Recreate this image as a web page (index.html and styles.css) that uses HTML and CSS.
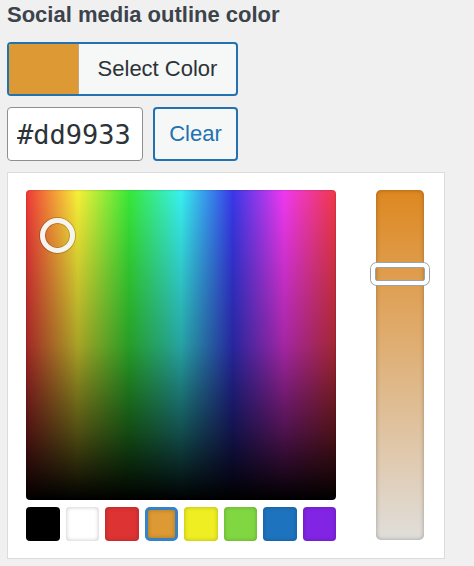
FILE: index.html
```html
<!doctype html>
<html>

<head>
  <title>Color field</title>
  <link rel="stylesheet" href="styles.css">
</head>

<body>
  <div class="field">
    <h3 class="field-title">Social media outline color</h3>
    <button type="button" class="color-result">
      <span class="color-swatch"></span>
      <span class="color-label">Select Color</span>
    </button>
    <div class="input-row">
      <input type="text" class="hex-input" value="#dd9933">
      <button type="button" class="clear-btn">Clear</button>
    </div>
    <div class="picker">
      <div class="picker-main">
        <div class="square">
          <span class="square-handle"></span>
        </div>
        <div class="palette">
          <a class="swatch" style="background-color: #000000"></a>
          <a class="swatch" style="background-color: #ffffff"></a>
          <a class="swatch" style="background-color: #dd3333"></a>
          <a class="swatch active" style="background-color: #dd9933"></a>
          <a class="swatch" style="background-color: #eeee22"></a>
          <a class="swatch" style="background-color: #81d742"></a>
          <a class="swatch" style="background-color: #1e73be"></a>
          <a class="swatch" style="background-color: #8224e3"></a>
        </div>
      </div>
      <div class="slider">
        <span class="slider-handle"></span>
      </div>
    </div>
  </div>
</body>

</html>
```

FILE: styles.css
```css
html {
  font-family: "Liberation Sans", Arial, sans-serif;
}

body {
  margin: 0;
  padding: 0 0 0 7px;
  background: #f0f0f1;
  color: #3c434a;
}

.field-title {
  margin: 0;
  padding-top: 1px;
  font-size: 22px;
  line-height: 28px;
  font-weight: bold;
  color: #3c434a;
}

.color-result {
  display: flex;
  align-items: stretch;
  box-sizing: border-box;
  width: 231px;
  height: 54px;
  margin-top: 13px;
  padding: 0;
  border: 2px solid #2271b1;
  border-radius: 4px;
  background: #f6f7f7;
  overflow: hidden;
  font: inherit;
}

.color-swatch {
  width: 69px;
  background: #dd9933;
  border-right: 1px solid #c9a57a;
}

.color-label {
  flex: 1;
  align-self: center;
  text-align: center;
  font-size: 22px;
  color: #2c3338;
}

.input-row {
  display: flex;
  margin-top: 11px;
}

.hex-input {
  box-sizing: border-box;
  width: 136px;
  height: 54px;
  padding: 0 0 0 9px;
  border: 1.5px solid #8c8f94;
  border-radius: 4px;
  background: #fff;
  font-family: "DejaVu Sans Mono", monospace;
  font-size: 27px;
  color: #2c3338;
}

.clear-btn {
  box-sizing: border-box;
  width: 85px;
  height: 54px;
  margin-left: 10px;
  padding: 0;
  border: 2px solid #2271b1;
  border-radius: 4px;
  background: #f6f7f7;
  color: #2271b1;
  font: inherit;
  font-size: 22px;
}

.picker {
  display: grid;
  grid-template-columns: 310px 48px;
  column-gap: 40px;
  box-sizing: border-box;
  width: 438px;
  height: 387px;
  margin-top: 11px;
  padding: 17px 19px 16px 18px;
  border: 1px solid #dcdcde;
  background: #fff;
}

.square {
  position: relative;
  height: 310px;
  border-radius: 4px;
  background:
    linear-gradient(to bottom, rgba(0, 0, 0, 0), rgba(0, 0, 0, 0.32) 50%, rgba(0, 0, 0, 0.68) 78%, #000),
    linear-gradient(to right, #f03838, #f8f038 16.7%, #38e838 33.3%, #38f0f0 50%, #3838e8 66.7%, #f038f0 83.3%, #f03848);
  box-shadow: inset 0 0 2px rgba(0, 0, 0, 0.3);
}

.square-handle {
  position: absolute;
  left: 14px;
  top: 28px;
  box-sizing: border-box;
  width: 35px;
  height: 35px;
  border: 5px solid #f6f4f0;
  border-radius: 50%;
  box-shadow: 0 0 0 1px rgba(0, 0, 0, 0.2), inset 0 0 0 1px rgba(0, 0, 0, 0.2);
}

.palette {
  display: grid;
  grid-template-columns: repeat(8, 1fr);
  column-gap: 6px;
  margin-top: 7px;
}

.swatch {
  box-sizing: border-box;
  height: 34px;
  border-radius: 4px;
  box-shadow: inset 0 0 4px rgba(0, 0, 0, 0.25);
}

.swatch.active {
  border: 3px solid #3582c4;
  border-radius: 5px;
}

.slider {
  position: relative;
  height: 350px;
  border-radius: 5px;
  background: linear-gradient(to bottom, #de8820, #e0dedb);
  box-shadow: inset 0 0 4px rgba(0, 0, 0, 0.3);
}

.slider-handle {
  position: absolute;
  left: -5px;
  right: -5px;
  top: 73px;
  height: 22px;
  box-sizing: border-box;
  border: 4px solid #fff;
  border-radius: 6px;
  box-shadow: 0 0 0 1px #9ca2ab, inset 0 0 0 1px #9ca2ab;
}
```
